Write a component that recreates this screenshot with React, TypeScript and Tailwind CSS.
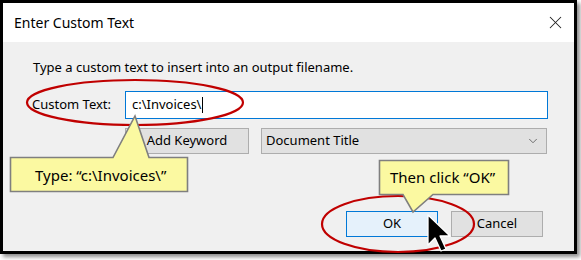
import { ChevronDown, X } from "lucide-react";

function Annotations() {
  return (
    <svg
      className="absolute left-0 top-0 pointer-events-none"
      width={581}
      height={260}
      viewBox="0 0 581 260"
    >
      {/* red ellipses */}
      <ellipse cx={135} cy={102.5} rx={108} ry={22.5} fill="none" stroke="#c00000" strokeWidth={2.2} />
      <ellipse cx={398} cy={224} rx={76} ry={28} fill="none" stroke="#c00000" strokeWidth={2.2} />

      {/* callout: type */}
      <path
        d="M10.5 157.5 H113 L135 116 L149 157.5 H187.5 V191.5 H10.5 Z"
        fill="#fbf9a1"
        stroke="#7f7f7f"
        strokeWidth={1.6}
        strokeLinejoin="miter"
      />
      {/* callout: then click */}
      <path
        d="M379.5 160.5 H508.5 V194.5 H433 L413 212 L403 194.5 H379.5 Z"
        fill="#fbf9a1"
        stroke="#7f7f7f"
        strokeWidth={1.6}
      />

      {/* mouse cursor */}
      <path
        d="M428 215 L428 245 L435 238 L441 251 L446 249 L440 236 L450 236 Z"
        fill="#000"
        stroke="#fff"
        strokeWidth={1.3}
        strokeLinejoin="round"
      />
    </svg>
  );
}

export default function App() {
  return (
    <div className="relative w-[581px] h-[260px] bg-white overflow-hidden font-['Noto_Sans',sans-serif] text-black">
      <div className="w-[577px] h-[254px] border-[3px] border-black bg-[#f0f0f0] shadow-[3px_3px_4px_rgba(0,0,0,0.45)] flex flex-col">
        {/* title bar */}
        <div className="h-[39px] bg-white flex items-center justify-between pl-[11px] pr-[8px]">
          <span className="text-[14px] leading-none">Enter Custom Text</span>
          <X size={21} strokeWidth={1.2} className="text-[#222]" />
        </div>

        {/* body */}
        <div className="flex flex-col text-[13px]">
          <p className="pl-[30px] mt-[16px] leading-[18px]">
            Type a custom text to insert into an output filename.
          </p>

          <div className="flex items-center mt-[15px] pl-[29px]">
            <span className="w-[93px]">Custom Text:</span>
            <div className="w-[423px] h-[28px] bg-white border border-[#0078d7] flex items-center pl-[6px]">
              c:\Invoices\
              <span className="w-px h-[16px] bg-black ml-[1px]" />
            </div>
          </div>

          <div className="flex items-center mt-[9px] pl-[122px] gap-[12px]">
            <div className="w-[124px] h-[26px] bg-[#e1e1e1] border border-[#adadad] flex items-center justify-center">
              Add Keyword
            </div>
            <div className="w-[286px] h-[26px] bg-[#e1e1e1] border border-[#adadad] flex items-center justify-between pl-[4px] pr-[6px]">
              Document Title
              <ChevronDown size={14} strokeWidth={1.4} className="text-[#555]" />
            </div>
          </div>

          <div className="flex items-center mt-[57px] pl-[343px] gap-[13px]">
            <div className="w-[92px] h-[26px] bg-[#e5f1fb] border border-[#0078d7] flex items-center justify-center">
              OK
            </div>
            <div className="w-[92px] h-[26px] bg-[#e1e1e1] border border-[#adadad] flex items-center justify-center">
              Cancel
            </div>
          </div>
        </div>
      </div>

      <Annotations />

      {/* callout texts */}
      <span className="absolute left-[35px] top-[165px] text-[15px] leading-[20px]">
        Type: “c:\Invoices\”
      </span>
      <span className="absolute left-[390px] top-[167px] text-[15px] leading-[20px]">
        Then click “OK”
      </span>
    </div>
  );
}
